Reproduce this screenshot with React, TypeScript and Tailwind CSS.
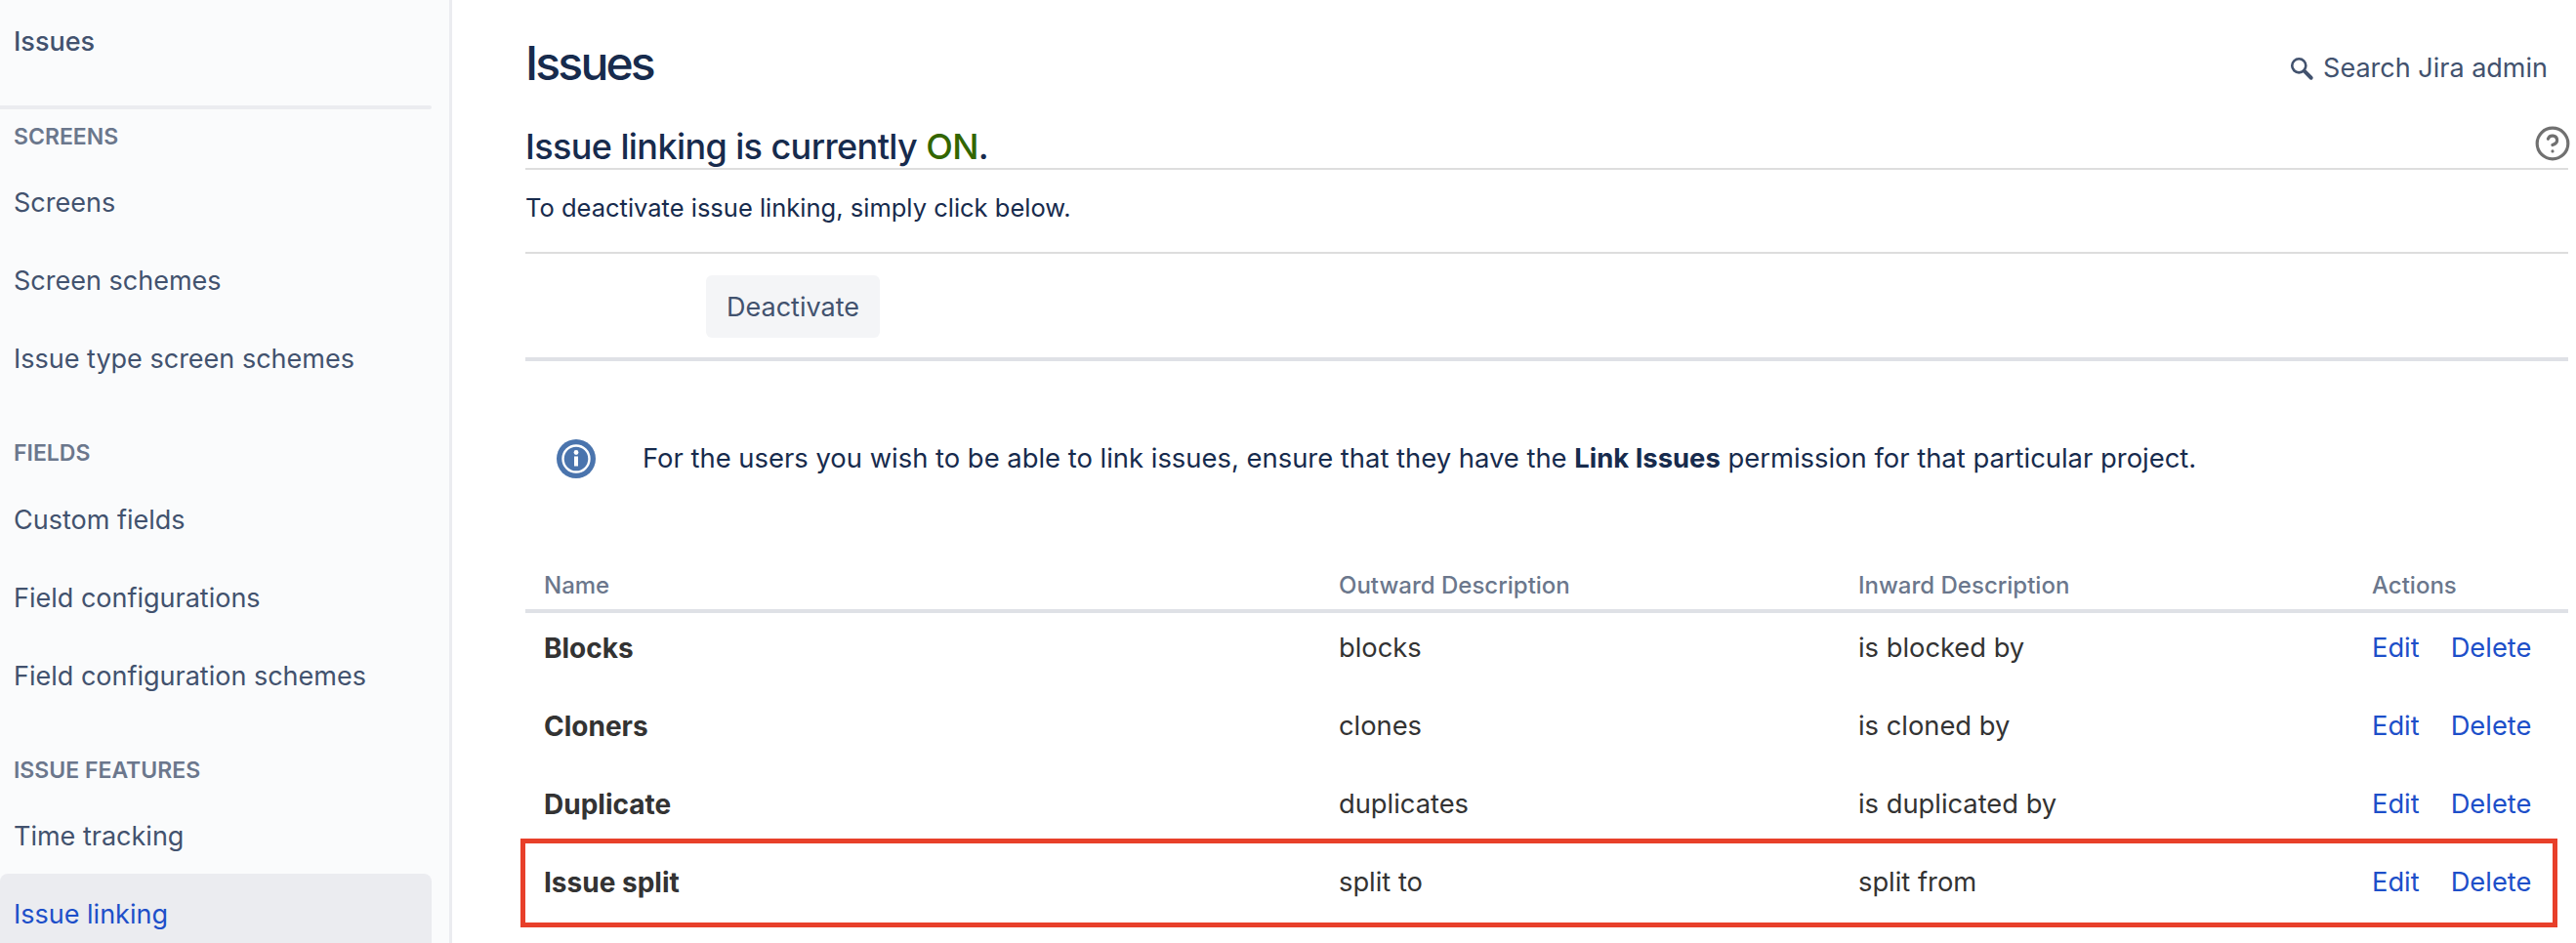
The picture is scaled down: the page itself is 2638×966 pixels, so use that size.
import { CircleHelp } from "lucide-react";

type LinkType = {
  name: string;
  outward: string;
  inward: string;
};

const linkTypes: LinkType[] = [
  { name: "Blocks", outward: "blocks", inward: "is blocked by" },
  { name: "Cloners", outward: "clones", inward: "is cloned by" },
  { name: "Duplicate", outward: "duplicates", inward: "is duplicated by" },
  { name: "Issue split", outward: "split to", inward: "split from" },
];

const navGroups = [
  { title: "SCREENS", items: ["Screens", "Screen schemes", "Issue type screen schemes"] },
  { title: "FIELDS", items: ["Custom fields", "Field configurations", "Field configuration schemes"] },
  { title: "ISSUE FEATURES", items: ["Time tracking"] },
];

function NavItem({ label }: { label: string }) {
  return <div className="flex h-20 items-center pl-[14px] text-[27px] text-[#42526e]">{label}</div>;
}

function Sidebar() {
  return (
    <aside className="h-full w-[463px] shrink-0 overflow-hidden border-r-[3px] border-[#ebecf0] bg-[#fafbfc]">
      <div className="w-[442px]">
        <div className="flex h-[108px] items-start pl-[14px] pt-[23px] text-[27px] font-medium text-[#42526e]">Issues</div>
        <div className="h-1 rounded-r-sm bg-[#ebecf0]" />
        {navGroups.map((group, i) => (
          <div key={group.title} className={i > 0 ? "mt-7" : ""}>
            <div className={`flex items-center pl-[14px] text-[23px] font-semibold text-[#6b778c] ${i === 1 ? "h-[57px]" : "h-14"}`}>
              {group.title}
            </div>
            {group.items.map((item) => (
              <NavItem key={item} label={item} />
            ))}
          </div>
        ))}
        <div className="-mt-0.5 flex h-[82px] items-center rounded-t-lg bg-[#ebecf0] pl-[14px] pt-0.5 text-[27px] text-[#1d4fc9]">
          Issue linking
        </div>
      </div>
    </aside>
  );
}

function SearchIcon() {
  return (
    <svg viewBox="0 0 24 24" className="h-[26px] w-[26px]" fill="none" stroke="#42526e">
      <circle cx="9.5" cy="9.5" r="6.5" strokeWidth="2.4" />
      <path d="M14.5 14.5 21 21" strokeWidth="3.6" strokeLinecap="round" />
    </svg>
  );
}

function InfoIcon() {
  return (
    <svg viewBox="0 0 40 40" className="h-10 w-10 shrink-0">
      <circle cx="20" cy="20" r="20" fill="#4a74ad" />
      <circle cx="20" cy="20" r="13.5" fill="none" stroke="#ffffff" strokeWidth="2.4" />
      <circle cx="20" cy="13.5" r="2.4" fill="#ffffff" />
      <rect x="18" y="17.5" width="4" height="10" fill="#ffffff" />
    </svg>
  );
}

function LinkRow({ row }: { row: LinkType }) {
  return (
    <div className="grid h-20 grid-cols-[814px_532px_526px_1fr] items-center pb-2 pl-[19px] text-[27.3px] text-[#333333]">
      <div className="text-[28px] font-bold">{row.name}</div>
      <div>{row.outward}</div>
      <div>{row.inward}</div>
      <div className="flex gap-8 text-[#1d4fc9]">
        <span>Edit</span>
        <span>Delete</span>
      </div>
    </div>
  );
}

export default function App() {
  return (
    <div className="flex h-[966px] w-[2638px] overflow-hidden bg-white font-['Inter',sans-serif]">
      <Sidebar />
      <main className="w-[2167px] pl-[75px] text-[#172b4d]">
        <div className="flex h-[130px] items-center justify-between">
          <h1 className="text-[48px] font-medium leading-none tracking-[-2.8px]">Issues</h1>
          <div className="mt-[10px] flex items-center gap-[9px] pr-[21px] text-[27px] text-[#42526e]">
            <SearchIcon />
            <span>Search Jira admin</span>
          </div>
        </div>
        <div className="flex h-[44px] items-start justify-between border-b-2 border-[#dddddd]">
          <h2 className="text-[36px] font-medium leading-10 tracking-[-0.6px]">
            Issue linking is currently <span className="text-[#336600]">ON</span>.
          </h2>
          <CircleHelp size={38} strokeWidth={2} className="-mr-[3px] -mt-[2px] text-[#707070]" />
        </div>
        <p className="flex h-[86px] items-center border-b-2 border-[#dddddd] pb-[6px] text-[25.5px]">
          To deactivate issue linking, simply click below.
        </p>
        <div className="flex h-[110px] items-center border-b-4 border-[#dfe1e6] pl-[185px] pt-0.5">
          <button className="flex h-16 w-[178px] items-center justify-center rounded-md bg-[#f4f5f7] pt-0.5 text-[27px] text-[#42526e]">
            Deactivate
          </button>
        </div>
        <div className="flex h-[200px] items-center gap-[48px] pl-[32px] text-[27.4px]">
          <InfoIcon />
          <p>
            For the users you wish to be able to link issues, ensure that they have the <b>Link Issues</b> permission for that particular project.
          </p>
        </div>
        <div className="grid h-[58px] grid-cols-[814px_532px_526px_1fr] items-center border-b-4 border-[#dfe1e6] pl-[19px] pt-1.5 text-[24px] font-medium text-[#6b778c]">
          <div>Name</div>
          <div>Outward Description</div>
          <div>Inward Description</div>
          <div>Actions</div>
        </div>
        {linkTypes.map((row) => (
          <div key={row.name} className="relative">
            <LinkRow row={row} />
            {row.name === "Issue split" && (
              <div className="absolute -left-[5px] right-[11px] -top-[9px] -bottom-[2px] border-[5px] border-[#e8402a]" />
            )}
          </div>
        ))}
      </main>
    </div>
  );
}
